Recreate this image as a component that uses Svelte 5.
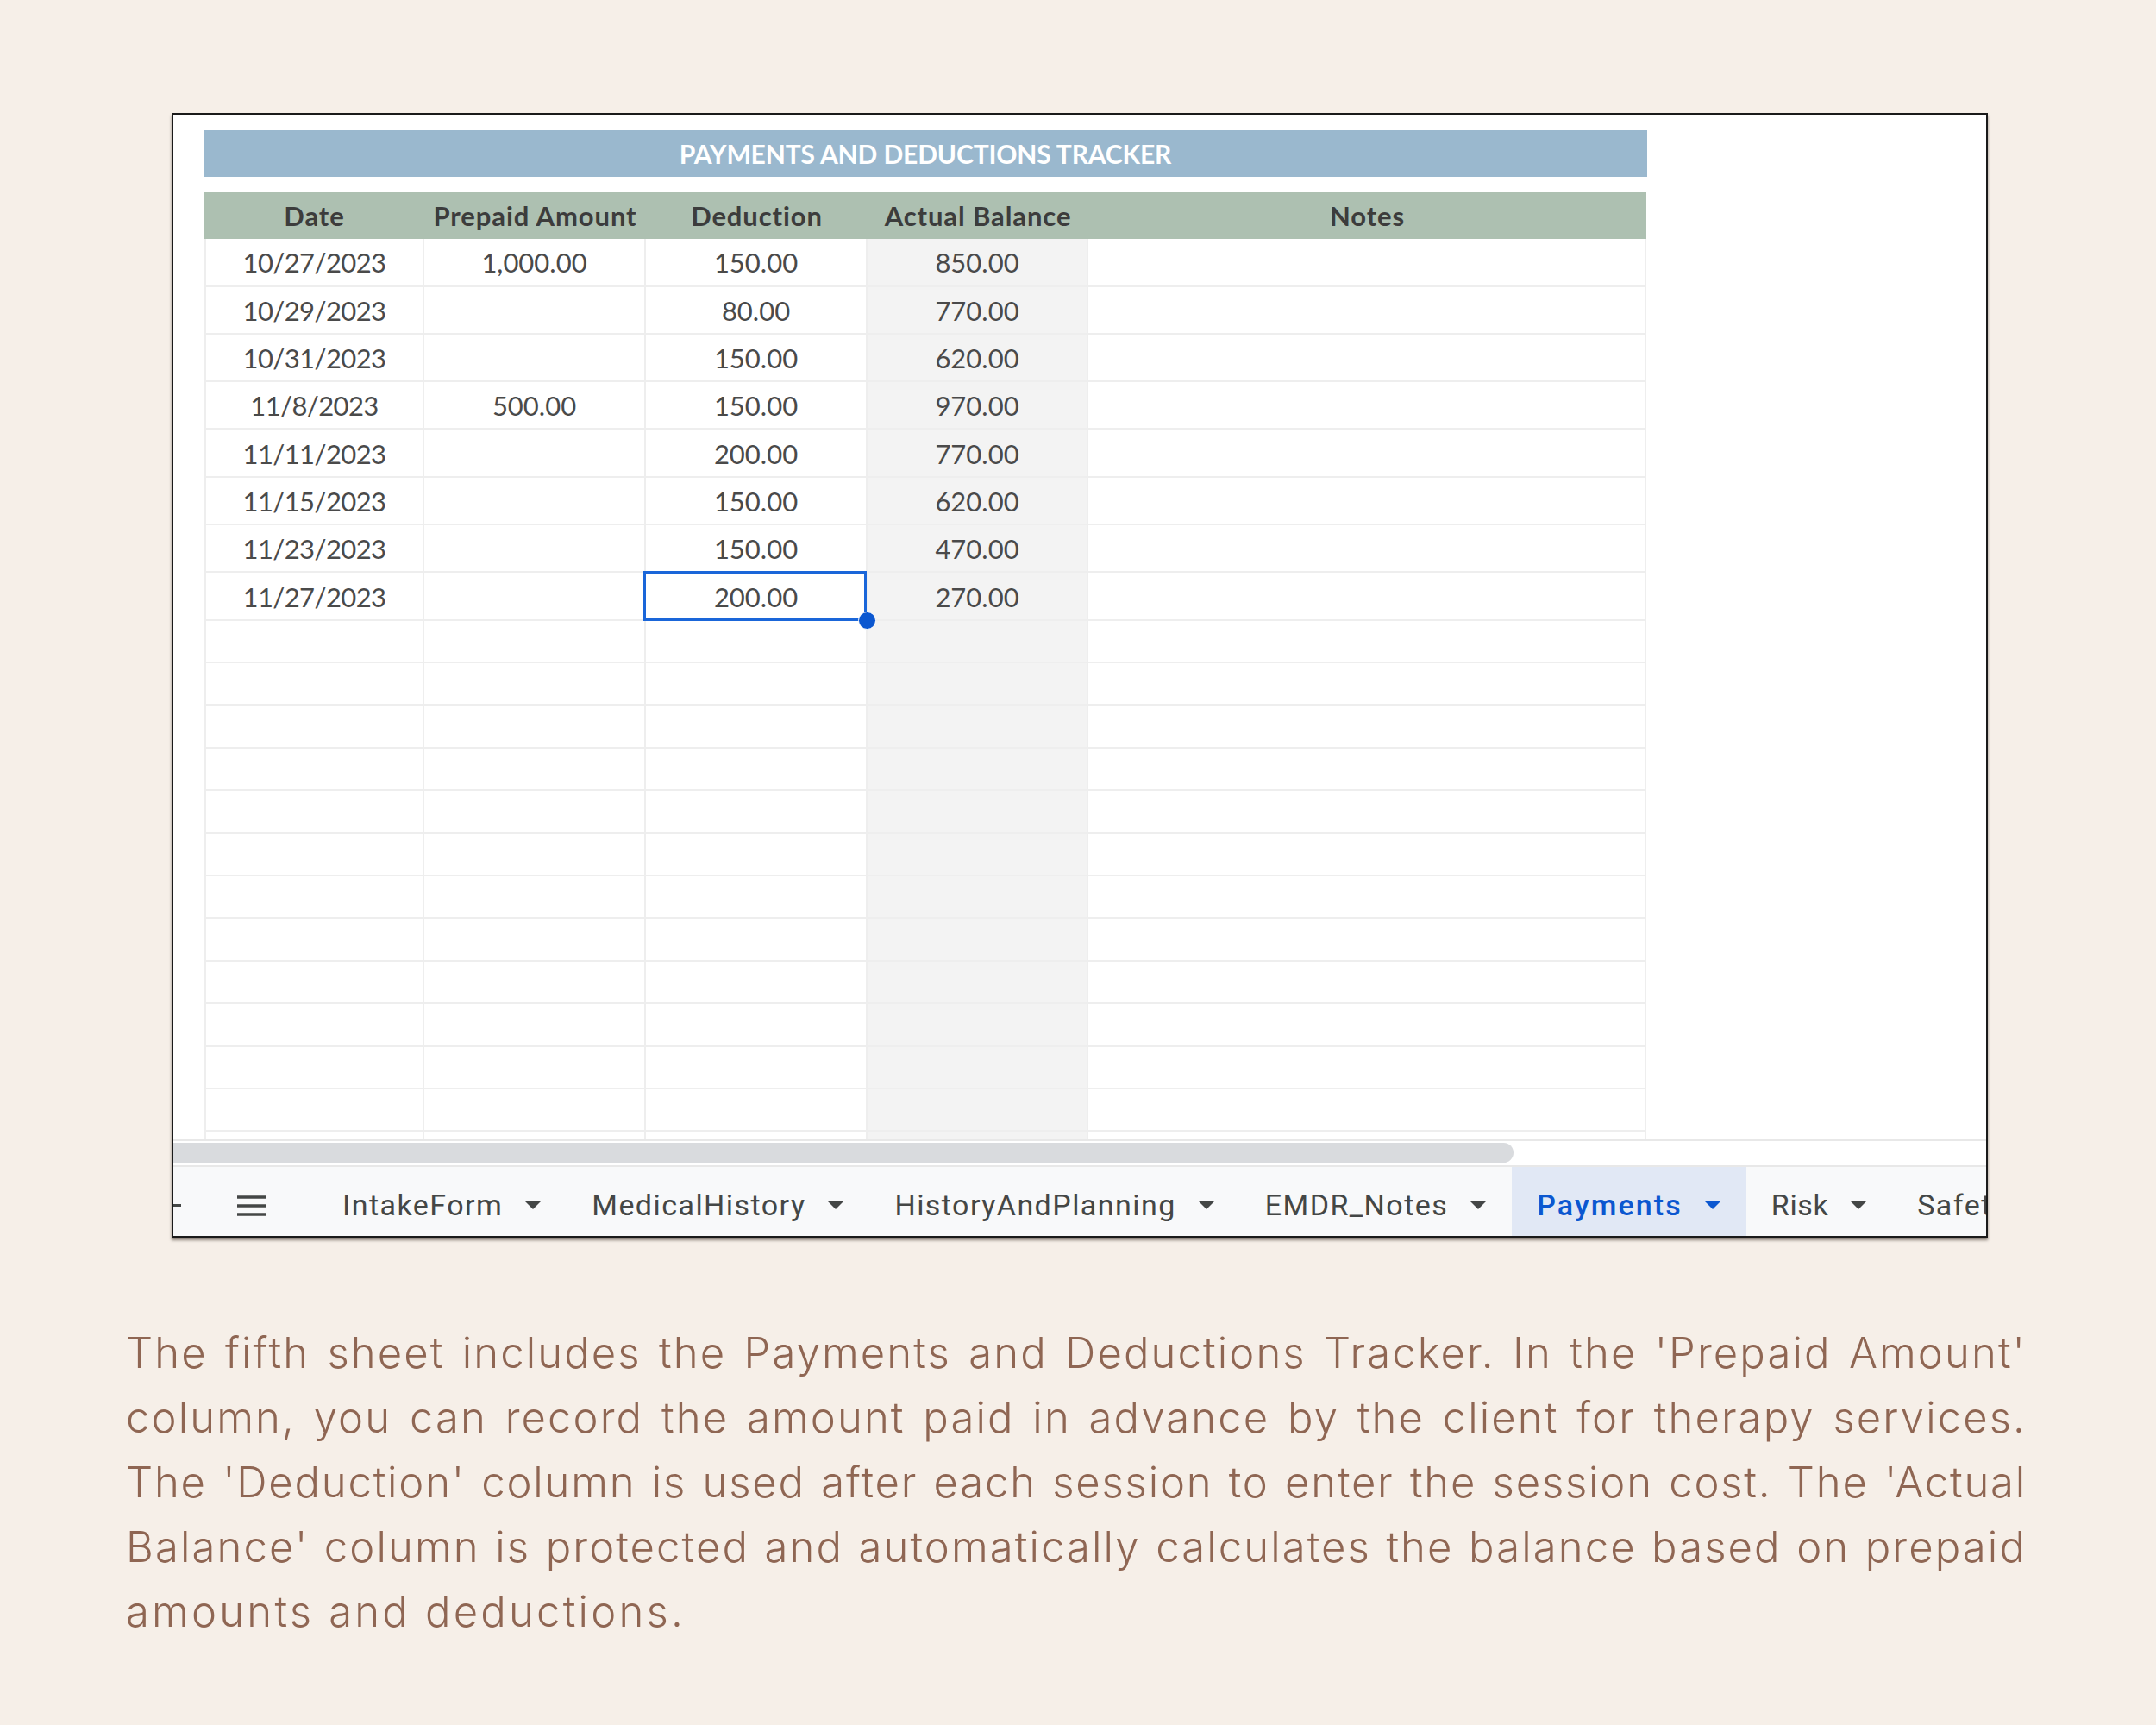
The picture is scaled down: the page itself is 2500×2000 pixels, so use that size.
<script>
  const rows = [
    ['10/27/2023', '1,000.00', '150.00', '850.00'],
    ['10/29/2023', '', '80.00', '770.00'],
    ['10/31/2023', '', '150.00', '620.00'],
    ['11/8/2023', '500.00', '150.00', '970.00'],
    ['11/11/2023', '', '200.00', '770.00'],
    ['11/15/2023', '', '150.00', '620.00'],
    ['11/23/2023', '', '150.00', '470.00'],
    ['11/27/2023', '', '200.00', '270.00']
  ];
  const heads = ['Date', 'Prepaid Amount', 'Deduction', 'Actual Balance', 'Notes'];
  const empties = Array.from({ length: 13 }, (_, i) => i);
  const tabs = ['IntakeForm', 'MedicalHistory', 'HistoryAndPlanning', 'EMDR_Notes', 'Payments', 'Risk', 'Safety'];
</script>

<div class="page">
  <section class="frame">
    <div class="sheet">
      <div class="banner">PAYMENTS AND DEDUCTIONS TRACKER</div>
      <div class="row head">
        {#each heads as h}<div class="cell">{h}</div>{/each}
      </div>
      {#each rows as r, i}
        <div class="row data">
          <div class="cell date">{r[0]}</div>
          <div class="cell">{r[1]}</div>
          <div class="cell" class:selected={i === 7}>
            {r[2]}
            {#if i === 7}<span class="handle"></span>{/if}
          </div>
          <div class="cell locked">{r[3]}</div>
          <div class="cell"></div>
        </div>
      {/each}
      {#each empties as e (e)}
        <div class="row blank">
          <div class="cell"></div>
          <div class="cell"></div>
          <div class="cell"></div>
          <div class="cell locked"></div>
          <div class="cell"></div>
        </div>
      {/each}
    </div>
    <div class="scroller"><div class="thumb"></div></div>
    <div class="tabbar">
      <span class="stub"></span>
      <svg class="menu" viewBox="0 0 34 24" width="34" height="24" aria-hidden="true">
        <path d="M0 2h34M0 12h34M0 22h34" stroke="#444746" stroke-width="3.4" fill="none" />
      </svg>
      {#each tabs as t}
        <div class="tab" class:active={t === 'Payments'}>
          <span>{t}</span>
          {#if t !== 'Safety'}
            <svg class="arrow" viewBox="0 0 20 10" width="20" height="10" aria-hidden="true"><path d="M0 0h20L10 10z" /></svg>
          {/if}
        </div>
      {/each}
    </div>
  </section>

  <p class="copy">
    <span class="line">The fifth sheet includes the Payments and Deductions Tracker. In the 'Prepaid Amount'</span>
    <span class="line">column, you can record the amount paid in advance by the client for therapy services.</span>
    <span class="line third">The 'Deduction' column is used after each session to enter the session cost. The 'Actual</span>
    <span class="line">Balance' column is protected and automatically calculates the balance based on prepaid</span>
    <span class="line last">amounts and deductions.</span>
  </p>
</div>

<style>
  :global(body) {
    margin: 0;
    background: #f6efe8;
  }
  .page {
    width: 2500px;
    height: 2000px;
    box-sizing: border-box;
    padding-top: 131px;
    background: #f6efe8;
    overflow: hidden;
  }
  .frame {
    box-sizing: border-box;
    width: 2106px;
    height: 1304px;
    margin-left: 199px;
    border: 2px solid #1a1a1a;
    background: #fff;
    box-shadow: 0 3px 3px rgba(60, 50, 40, 0.55);
    display: flex;
    flex-direction: column;
    overflow: hidden;
  }
  .sheet {
    height: 1188px;
    flex: none;
    padding: 18px 0 0 35px;
    box-sizing: border-box;
    overflow: hidden;
    font-family: Lato, "Liberation Sans", sans-serif;
    color: #4a4a4a;
  }
  .banner {
    width: 1674px;
    height: 54px;
    margin-bottom: 18px;
    background: #9ab8ce;
    color: #fff;
    font-weight: 700;
    font-size: 30px;
    letter-spacing: -0.15px;
    display: flex;
    align-items: center;
    justify-content: center;
  }
  .row {
    display: grid;
    grid-template-columns: 255px 257px 257px 256px 647px;
    width: 1672px;
    margin-left: 1px;
  }
  .cell {
    box-sizing: border-box;
    position: relative;
    display: flex;
    align-items: center;
    justify-content: center;
    border-right: 2px solid #eee;
    border-bottom: 2px solid #eee;
  }
  .row .cell:first-child {
    border-left: 2px solid #eee;
  }
  .head {
    height: 54.3px;
    background: #adc0b1;
    font-weight: 700;
    font-size: 31px;
    letter-spacing: 0.9px;
    color: #3c3c3c;
  }
  .head .cell,
  .row.head .cell:first-child {
    border: 0;
  }
  .data {
    height: 55.3px;
    font-size: 31px;
  }
  .data .cell {
    padding-top: 1px;
  }
  .date {
    letter-spacing: -0.6px;
  }
  .blank {
    height: 49.4px;
  }
  .locked {
    background: #f3f3f3;
  }
  .selected {
    z-index: 1;
  }
  .selected::after {
    content: "";
    position: absolute;
    left: -3px;
    top: -2px;
    right: -1px;
    bottom: -2px;
    border: 3.5px solid #1a66d9;
  }
  .handle {
    position: absolute;
    z-index: 2;
    right: -12px;
    bottom: -12px;
    width: 19px;
    height: 19px;
    border-radius: 50%;
    background: #0b57d0;
    border: 1px solid #fff;
  }
  .scroller {
    flex: none;
    box-sizing: border-box;
    height: 32px;
    padding-top: 2px;
    border-top: 2px solid #e8e8e8;
    border-bottom: 2px solid #e8e8e8;
  }
  .thumb {
    width: 1554px;
    height: 23px;
    background: #d9dbde;
    border-radius: 0 12px 12px 0;
  }
  .tabbar {
    flex: 1;
    min-height: 0;
    display: flex;
    align-items: center;
    background: #f8f9fa;
    font-family: Roboto, "Liberation Sans", sans-serif;
    font-size: 34px;
    letter-spacing: 1.45px;
    color: #444746;
    white-space: nowrap;
    overflow: hidden;
  }
  .stub {
    flex: none;
    width: 9px;
    height: 3px;
    margin-top: 9px;
    background: #444746;
  }
  .menu {
    flex: none;
    margin: 9px 59px 0 65px;
  }
  .tab {
    flex: none;
    height: 100%;
    box-sizing: border-box;
    padding: 8px 29px 0;
    display: flex;
    align-items: center;
    gap: 25px;
  }
  .arrow {
    flex: none;
    fill: #444746;
  }
  .tab.active {
    background: #e1e8f5;
    color: #0b57d0;
    font-weight: 500;
    letter-spacing: 2.1px;
  }
  .tab.active + .tab {
    letter-spacing: 0.6px;
  }
  .tab.active .arrow {
    fill: #0b57d0;
  }
  .copy {
    width: 2204px;
    margin: 96px 0 0 146px;
    font-family: Inter, "Open Sans", sans-serif;
    font-weight: 300;
    font-size: 49px;
    line-height: 75px;
    letter-spacing: 2.1px;
    color: #8f6653;
  }
  .line {
    display: block;
    white-space: nowrap;
    text-align: justify;
    text-align-last: justify;
  }
  .line.third {
    letter-spacing: 1.8px;
  }
  .line.last {
    text-align-last: left;
    letter-spacing: 3.2px;
  }
</style>
